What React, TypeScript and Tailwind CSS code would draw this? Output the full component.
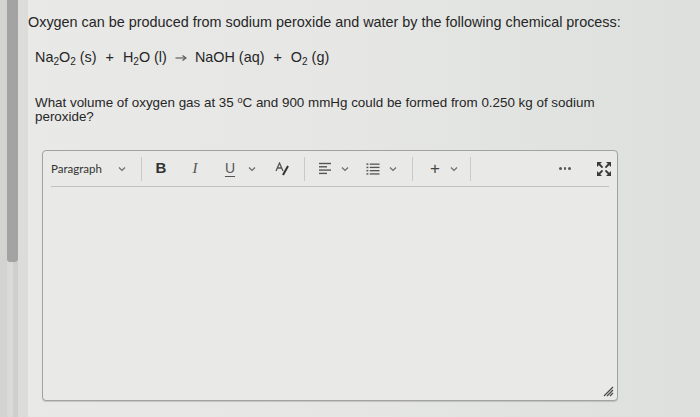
import React from 'react';

const Chevron = () => (
  <svg width="8" height="6" viewBox="0 0 8 6" className="shrink-0">
    <path d="M1 1.5 L4 4.5 L7 1.5" fill="none" stroke="#6b6b6b" strokeWidth="1.2" />
  </svg>
);

const Sep = ({ ml }: { ml: string }) => <div className={`${ml} w-px h-[24px] bg-[#c9c9c8] shrink-0`} />;

const AlignIcon = () => (
  <svg width="14" height="13" viewBox="0 0 14 13">
    <g stroke="#555" strokeWidth="1.4">
      <path d="M1 1.5 H13" />
      <path d="M1 4.8 H9" />
      <path d="M1 8.1 H13" />
      <path d="M1 11.4 H9" />
    </g>
  </svg>
);

const ListIcon = () => (
  <svg width="15" height="14" viewBox="0 0 15 14">
    <g fill="#555">
      <rect x="0.5" y="1" width="2" height="1.6" />
      <rect x="0.5" y="4.5" width="2" height="1.6" />
      <rect x="0.5" y="8" width="2" height="1.6" />
      <rect x="0.5" y="11.5" width="2" height="1.6" />
    </g>
    <g stroke="#555" strokeWidth="1.4">
      <path d="M4 1.8 H14.5" />
      <path d="M4 5.3 H14.5" />
      <path d="M4 8.8 H14.5" />
      <path d="M4 12.3 H14.5" />
    </g>
  </svg>
);

const ExpandIcon = () => (
  <svg width="16" height="16" viewBox="0 0 16 16">
    <g stroke="#3a3a3a" strokeWidth="1.8" strokeLinecap="round">
      <path d="M2 2 L6 6" />
      <path d="M14 2 L10 6" />
      <path d="M2 14 L6 10" />
      <path d="M14 14 L10 10" />
    </g>
    <g fill="#3a3a3a">
      <path d="M1 1 H6 L1 6 Z" />
      <path d="M15 1 H10 L15 6 Z" />
      <path d="M1 15 H6 L1 10 Z" />
      <path d="M15 15 H10 L15 10 Z" />
    </g>
  </svg>
);

const ResizeHandle = () => (
  <svg width="12" height="12" viewBox="0 0 12 12">
    <g stroke="#4a4a4a" strokeWidth="1.2">
      <path d="M2 11 L11 2" />
      <path d="M5 11 L11 5" />
      <path d="M8 11 L11 8" />
    </g>
  </svg>
);

export default function App() {
  return (
    <div className="w-[700px] h-[417px] flex overflow-hidden bg-linear-to-r from-[#e9e9e7] via-[#e6e7e5] to-[#dde0dd] text-[#262626] font-['Liberation_Sans',Arial,sans-serif]">
      <div className="w-[28px] shrink-0 flex bg-[#dadad9]">
        <div className="w-[7px] bg-[#d3d3d2]" />
        <div className="w-[11px] flex flex-col">
          <div className="h-[262px] bg-[#a3a3a3] rounded-b-[3px]" />
          <div className="flex-1 ml-[6px] w-[5px] bg-[#cfcfce]" />
        </div>
        <div className="flex-1 bg-[#dcdcdb]" />
      </div>

      <div className="flex-1 flex flex-col">
        <p className="mt-[14px] text-[14.4px] leading-[17px]">
          Oxygen can be produced from sodium peroxide and water by the following chemical process:
        </p>

        <p className="mt-[18px] ml-[7px] text-[14.4px] leading-[17px] flex items-baseline">
          <span>Na<sub className="text-[10px]">2</sub>O<sub className="text-[10px]">2</sub> (s)</span>
          <span className="mx-[9px]">+</span>
          <span>H<sub className="text-[10px]">2</sub>O (l)</span>
          <span className="mx-[8px] self-center flex">
            <svg width="12" height="8" viewBox="0 0 12 8">
              <path d="M0.5 4 H10" stroke="#555" strokeWidth="1.1" />
              <path d="M7.5 1.5 L11 4 L7.5 6.5" fill="none" stroke="#555" strokeWidth="1.1" />
            </svg>
          </span>
          <span>NaOH (aq)</span>
          <span className="mx-[9px]">+</span>
          <span>O<sub className="text-[10px]">2</sub> (g)</span>
        </p>

        <p className="mt-[30px] ml-[7px] text-[13.4px] leading-[14px]">
          What volume of oxygen gas at 35 <sup className="text-[9px]">o</sup>C and 900 mmHg could be formed from 0.250 kg of sodium
          <br />
          peroxide?
        </p>

        <div className="mt-[26px] ml-[14px] w-[576px] h-[251px] border border-[#a2a2a1] rounded-[4px] bg-[#e9eae8] flex flex-col shadow-[0_1px_1px_rgba(0,0,0,0.15)]">
          <div className="h-[35px] flex items-center pl-[8px] pr-[5px]">
            <span className="w-[60px] text-[11.5px] text-[#333] font-['Lato',sans-serif]">Paragraph</span>
            <span className="ml-[7px] flex"><Chevron /></span>
            <Sep ml="ml-[15px]" />
            <span className="w-[38px] text-center text-[15px] font-bold text-[#333]">B</span>
            <span className="w-[30px] text-center text-[15px] italic text-[#555] font-['Liberation_Serif',serif]">I</span>
            <span className="ml-[12px] w-[16px] text-center text-[14px] text-[#555] underline underline-offset-[3px]">U</span>
            <span className="ml-[10px] flex"><Chevron /></span>
            <span className="ml-[17px] w-[20px] flex justify-center">
              <svg width="16" height="14" viewBox="0 0 16 14">
                <path d="M1 9 L4.5 1 L8 9 M2.4 6 H6.6" fill="none" stroke="#555" strokeWidth="1.3" />
                <path d="M8 13 L13 4" stroke="#333" strokeWidth="2" />
              </svg>
            </span>
            <Sep ml="ml-[11px]" />
            <span className="ml-[13px] w-[14px] flex justify-center"><AlignIcon /></span>
            <span className="ml-[9px] flex"><Chevron /></span>
            <span className="ml-[17px] w-[14px] flex justify-center"><ListIcon /></span>
            <span className="ml-[9px] flex"><Chevron /></span>
            <Sep ml="ml-[15px]" />
            <span className="ml-[16px] w-[12px] text-center text-[17px] leading-none text-[#444]">+</span>
            <span className="ml-[9px] flex"><Chevron /></span>
            <Sep ml="ml-[12px]" />
            <div className="flex-1" />
            <span className="w-[16px] flex justify-center gap-[2px]">
              <span className="w-[2.5px] h-[2.5px] bg-[#555] rounded-full" />
              <span className="w-[2.5px] h-[2.5px] bg-[#555] rounded-full" />
              <span className="w-[2.5px] h-[2.5px] bg-[#555] rounded-full" />
            </span>
            <span className="ml-[23px] w-[16px] flex justify-center"><ExpandIcon /></span>
          </div>
          <div className="mx-[8px] h-px bg-[#c2c2c1]" />
          <div className="flex-1 flex items-end justify-end pr-[3px] pb-[3px]">
            <ResizeHandle />
          </div>
        </div>
      </div>
    </div>
  );
}
